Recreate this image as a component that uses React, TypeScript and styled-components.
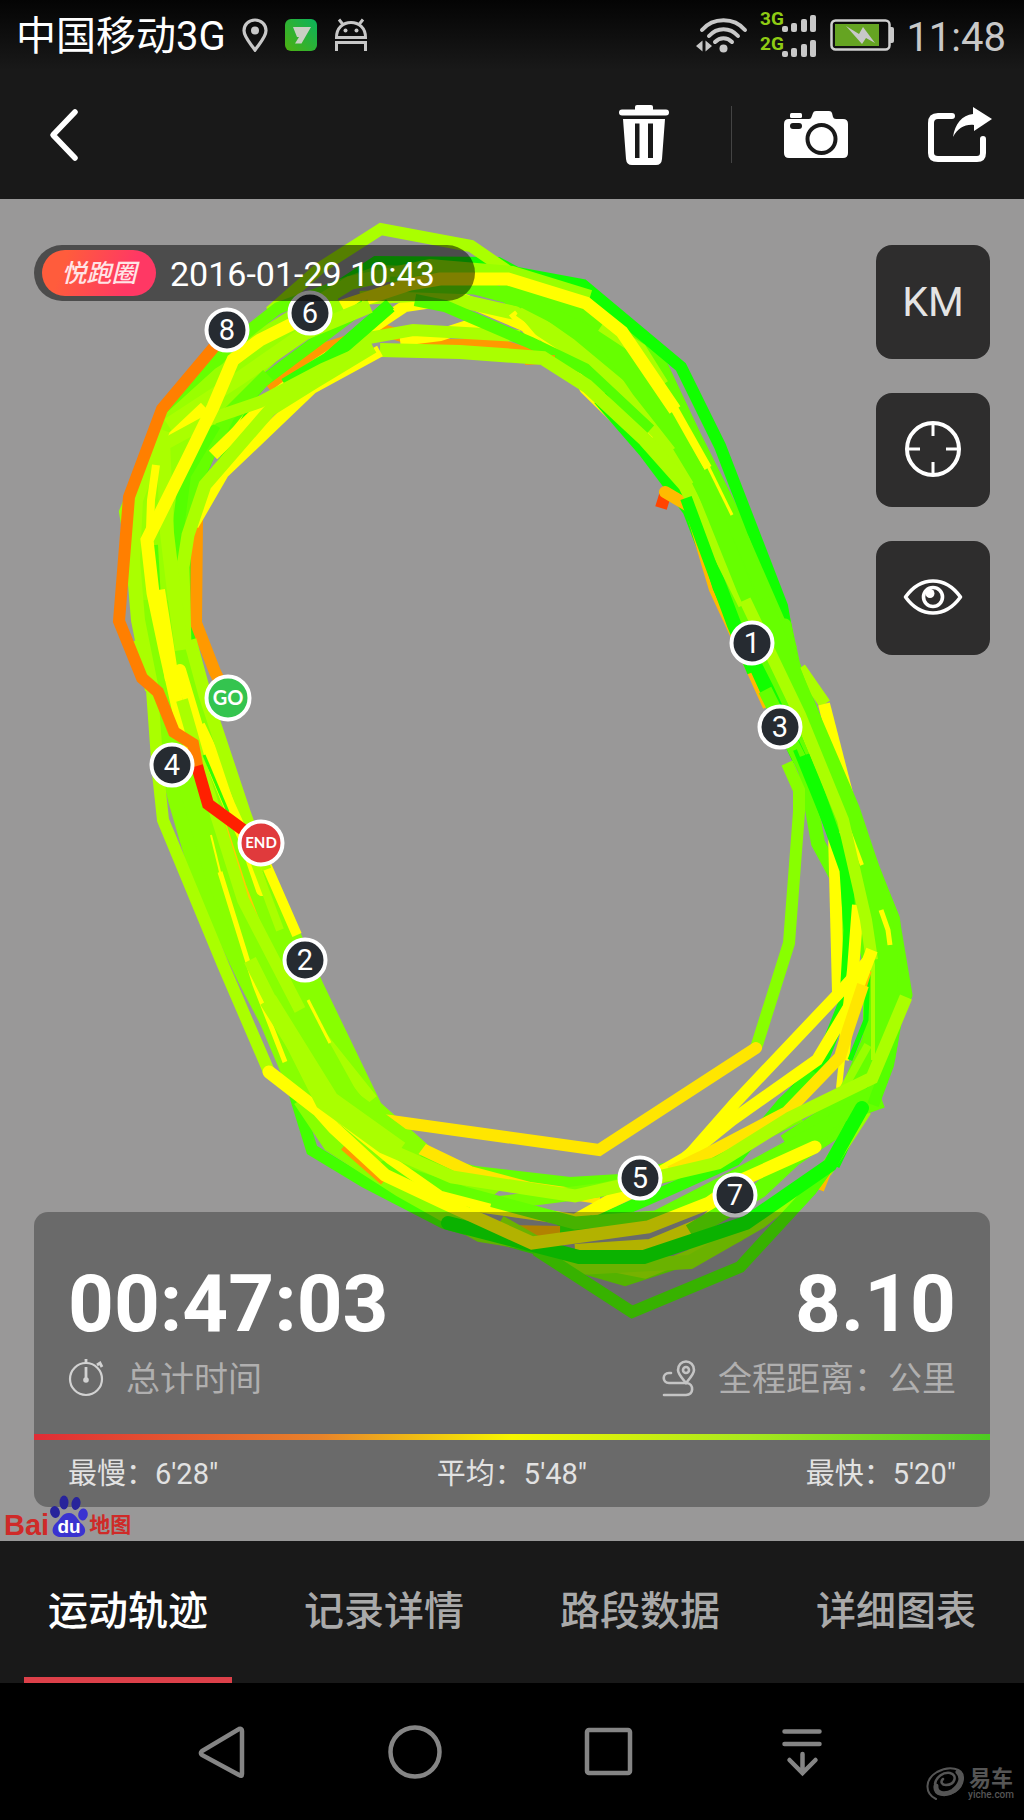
import React, { useState } from "react";
import styled, { createGlobalStyle } from "styled-components";

const sans = `Roboto, "Noto Sans CJK SC", sans-serif`;

const Global = createGlobalStyle`
  * { box-sizing: border-box; }
  body { margin: 0; background: #000; font-family: ${sans}; }
  button { font: inherit; color: inherit; background: none; border: 0; padding: 0; cursor: pointer; }
  svg { display: block; flex: none; }
`;

const Screen = styled.div`
  display: flex;
  flex-direction: column;
  min-height: 100vh;
  background: #191919;
  color: #fff;
`;

const StatusBar = styled.div`
  display: flex;
  align-items: center;
  justify-content: space-between;
  height: 70px;
  padding: 0 18px 0 16px;
  background: linear-gradient(#040404, #191919);
`;

const StatusGroup = styled.div<{ $gap: number }>`
  display: flex;
  align-items: center;
  gap: ${(p) => p.$gap}px;
`;

const Carrier = styled.span`
  padding-top: 4px;
  font-size: 40px;
  line-height: 66px;
`;

const Clock = styled.span`
  padding-top: 5px;
  font-size: 40px;
  line-height: 65px;
  color: #c8c8c8;
`;

const Header = styled.header`
  display: flex;
  align-items: center;
  justify-content: space-between;
  height: 129px;
  padding: 0 32px 0 48px;
`;

const Actions = styled.div`
  display: flex;
  align-items: center;
`;

const Divider = styled.span`
  width: 1px;
  height: 57px;
  margin: 0 52px 0 62px;
  background: #444;
`;

const ShareButton = styled.button`
  margin-left: 80px;
`;

const MapArea = styled.main`
  position: relative;
  display: flex;
  flex: 1;
  flex-direction: column;
  justify-content: space-between;
  gap: 200px;
  padding: 46px 34px 34px;
  background: #999898;
`;

const MapCanvas = styled.svg`
  position: absolute;
  inset: 0;
  width: 100%;
  height: 100%;
`;

const Overlay = styled.div`
  position: relative;
  display: flex;
  align-items: flex-start;
  justify-content: space-between;
`;

const DatePill = styled.div`
  display: flex;
  align-items: center;
  gap: 14px;
  height: 56px;
  padding: 0 40px 0 8px;
  border-radius: 28px;
  background: rgba(0, 0, 0, 0.5);
  font-size: 34px;
  line-height: 54px;
`;

const DateText = styled.time`
  padding-top: 2px;
`;

const Brand = styled.span`
  width: 114px;
  height: 46px;
  border-radius: 23px;
  background: linear-gradient(110deg, #ff5c3c 20%, #ff3864 75%);
  color: #ffe4e6;
  font-size: 25px;
  font-style: italic;
  font-weight: 500;
  line-height: 48px;
  text-align: center;
`;

const MapTools = styled.div`
  display: grid;
  gap: 34px;
`;

const ToolButton = styled.button`
  display: grid;
  place-items: center;
  width: 114px;
  height: 114px;
  border-radius: 16px;
  background: #2e2d2d;
  && { font-size: 41px; color: #e4e4e4; }
`;

const StatsCard = styled.section`
  position: relative;
  padding-top: 44px;
  border-radius: 14px;
  background: rgba(0, 0, 0, 0.3);
`;

const Totals = styled.div`
  display: flex;
  justify-content: space-between;
  padding: 0 34px 28px;
`;

const Total = styled.div<{ $end?: boolean }>`
  display: flex;
  flex-direction: column;
  align-items: ${(p) => (p.$end ? "flex-end" : "flex-start")};
`;

const Value = styled.strong`
  font-size: 80px;
  font-weight: 700;
  line-height: 96px;
`;

const Caption = styled.span`
  display: flex;
  align-items: center;
  gap: 22px;
  color: #b0afaf;
  font-size: 34px;
  line-height: 54px;
`;

const PaceScale = styled.div`
  height: 6px;
  background: linear-gradient(90deg, #e02c36, #e8832a 30%, #f6f600 50%, #a8e81e 75%, #4ccb22);
`;

const PaceRow = styled.div`
  display: flex;
  justify-content: space-between;
  padding: 2px 34px 0;
  color: #e2e2e2;
  font-size: 29px;
  line-height: 65px;
`;

const MapCredit = styled.div`
  position: absolute;
  left: 4px;
  bottom: 4px;
  display: flex;
  align-items: flex-end;
  color: #cf2a28;
  font-size: 21px;
  font-weight: 700;
  line-height: 24px;
`;

const CreditLatin = styled.span`
  font-family: "Liberation Sans", sans-serif;
  font-size: 29px;
`;

const Tabs = styled.nav`
  display: grid;
  grid-template-columns: repeat(4, 1fr);
`;

const Tab = styled.button<{ $active: boolean }>`
  display: flex;
  flex-direction: column;
  align-items: center;
  height: 142px;
  && {
    color: ${(p) => (p.$active ? "#fff" : "#a9a9a9")};
    font-size: 40px;
    font-weight: 500;
    line-height: 142px;
  }

  &::after {
    content: "";
    width: 208px;
    height: 6px;
    margin-top: -6px;
    background: ${(p) => (p.$active ? "#dc4049" : "transparent")};
  }
`;

const SystemNav = styled.nav`
  position: relative;
  display: grid;
  grid-template-columns: repeat(4, 1fr);
  height: 137px;
  padding: 0 125px;
  background: #000;
`;

const SystemButton = styled.button`
  display: grid;
  place-items: center;
`;

const Watermark = styled.div`
  position: absolute;
  right: 10px;
  bottom: 19px;
  display: flex;
  align-items: center;
  gap: 2px;
  color: #555;
`;

const WatermarkText = styled.div`
  display: flex;
  flex-direction: column;
  align-items: center;
  font-size: 22px;
  font-weight: 700;
  line-height: 22px;
`;

const WatermarkUrl = styled.span`
  font-size: 10px;
  font-weight: 500;
  line-height: 10px;
`;

type Track = [string, string, number?, boolean?];

const LIME = "#aaff00";
const GREEN = "#66ff00";
const DEEP = "#33ff00";
const PURE = "#11ff00";
const YELLOW = "#ffff00";
const AMBER = "#ffe600";
const ORANGE = "#ff9900";

// Each lap segment: colour, points, optional width, optional round cap.
const tracks: Track[] = [
  // top of the loop
  [PURE, "300,312 376,262 498,263 517,273 583,285 681,367 720,446 782,606 792,664"],
  [LIME, "270,312 320,268 381,229 471,246 512,274"],
  [GREEN, "222,352 278,308 380,271 500,274"],
  ["#99ff00", "290,320 350,283 430,266 512,273 590,297", 14],
  [ORANGE, "270,390 320,350 383,330 430,345 500,345 555,362"],
  [YELLOW, "230,430 300,376 405,306 460,298 540,332 600,385"],
  [YELLOW, "400,340 440,335 480,322"],
  [LIME, "320,365 363,339 413,330 520,336"],
  [LIME, "360,298 430,294 515,313 579,355 647,420 694,482", 14],
  [YELLOW, "512,313 545,352 600,390 650,440", 8],
  [LIME, "520,310 570,345 630,395 690,470", 14],
  [GREEN, "390,284 475,287 523,300 607,343 639,390 694,460 742,540 790,650", 15],
  [LIME, "602,325 640,350 662,385", 14],
  [YELLOW, "340,307 410,284 440,279 508,279 586,303 622,332 675,410", 13],
  [YELLOW, "673,406 708,468", 8],
  [YELLOW, "706,462 732,515", 3],
  ["#55ff00", "415,300 445,306 531,343 585,369 650,430"],
  // upper right descent
  [ORANGE, "555,359 525,361", 8],
  [YELLOW, "585,388 638,440", 12, true],
  [PURE, "600,398 645,450 690,510 734,625 767,690 800,760", 15],
  ["#ffbb00", "686,506 711,590 747,668 765,708", 4],
  ["#ff4400", "661,508 666,492"],
  ["#ffbb00", "665,492 687,505", 12, true],
  [LIME, "380,350 460,352 543,358 587,386 645,440 685,485 745,604", 14],
  [GREEN, "680,445 700,478 745,590 785,680", 16],
  [PURE, "686,498 733,625 753,672", 12],
  // upper left
  [DEEP, "390,304 320,365 250,415 220,470"],
  ["#55ff00", "365,305 262,382 215,440 190,500 176,540"],
  [DEEP, "390,306 330,358 285,385", 14],
  [GREEN, "225,350 187,395 163,420", 14],
  ["#99ff00", "340,303 290,330 220,375 165,425", 16],
  [LIME, "370,306 305,333 240,378 168,425", 14],
  [GREEN, "268,375 228,415 195,480 178,530", 14],
  ["#55ff00", "215,425 185,475 174,560", 12],
  [YELLOW, "272,398 213,455"],
  ["#99ff00", "130,500 125,512 133,560 138,620", 12],
  [DEEP, "196,530 190,580 190,640"],
  [ORANGE, "197,520 196,623 215,672 228,698"],
  [YELLOW, "380,351 312,388 223,473 193,525"],
  [LIME, "373,347 315,382 270,410 205,485 188,535 183,567 185,647", 13],
  [YELLOW, "205,407 170,440"],
  [LIME, "373,347 323,369 260,402 213,418 167,443"],
  [LIME, "163,440 167,533 175,600 182,650", 14],
  ["#55ff00", "155,545 158,600", 6],
  [LIME, "163,430 136,500 133,560 138,620 152,690", 14],
  [YELLOW, "156,465 151,500 150,530", 8],
  [YELLOW, "310,315 260,340 233,360 213,407 187,460 147,540 153,593 165,650 180,717 197,765", 13],
  [YELLOW, "158,590 166,640 172,680", 14],
  // lower left
  ["#88ff00", "160,735 175,800 200,885 245,980 300,1085", 14],
  [LIME, "138,640 152,690 158,773 163,820 223,965 270,1074"],
  [YELLOW, "200,725 262,855 297,935", 10],
  [LIME, "190,640 205,695 245,815 265,870", 13],
  [YELLOW, "180,670 198,730 230,807 245,840 262,890", 12, true],
  [LIME, "250,850 280,930", 8],
  ["#ffcc00", "222,820 243,885 262,935", 6],
  [LIME, "182,700 205,780 243,900 300,1010 372,1100", 12],
  [YELLOW, "211,835 222,880", 2],
  [YELLOW, "220,872 255,985 285,1062", 5],
  [DEEP, "204,755 228,812", 3],
  // right side
  [LIME, "800,668 825,704", 12],
  [YELLOW, "824,704 850,805"],
  [GREEN, "765,690 805,770 818,843 838,880 850,960", 14],
  [YELLOW, "834,832 838,992"],
  [PURE, "805,755 846,870 850,930 846,1000 822,1060 780,1110", 13],
  [GREEN, "880,935 880,1040 850,1110 790,1150", 34],
  [YELLOW, "858,905 853,970 843,1060", 12],
  [YELLOW, "843,1050 839,1088", 6],
  [PURE, "868,970 866,1020 850,1060", 5],
  [GREEN, "785,625 792,664 842,795 893,918 906,995", 13, true],
  [GREEN, "760,600 790,670 850,810 880,900 888,960 886,1040", 20],
  [LIME, "865,920 873,965 873,1060", 4],
  ["#99ff00", "868,1045 840,1095", 8],
  ["#ffbb00", "866,970 850,1020"],
  [YELLOW, "881,910 888,930 890,945", 5],
  [YELLOW, "785,685 840,815", 8],
  [YELLOW, "848,828 862,865", 4],
  [PURE, "795,750 850,885", 4],
  [LIME, "745,600 800,715 843,820 866,920 872,960", 12],
  ["#88ff00", "787,763 799,790 799,812 789,943 756,1048"],
  [PURE, "882,1078 857,1115 833,1165", 14],
  // bottom sweep
  [AMBER, "380,1120 391,1121 599,1150 756,1048", 12, true],
  ["#44ff00", "295,1095 312,1150 365,1182 444,1223 534,1248 579,1262"],
  ["#88ff00", "300,1100 330,1145 400,1190 480,1235 560,1248", 14],
  [ORANGE, "345,1145 385,1180"],
  [GREEN, "420,1158 475,1172 570,1183 620,1180 680,1165"],
  [AMBER, "420,1148 470,1172 530,1188 600,1198"],
  ["#77ff00", "500,1203 600,1190 690,1170 800,1115", 14],
  [YELLOW, "470,1205 575,1220 610,1200 650,1180"],
  [DEEP, "554,1233 607,1217 673,1188 735,1160 783,1103 811,1077", 12, true],
  [YELLOW, "867,962 840,992 735,1103 685,1160 650,1184 590,1212"],
  [YELLOW, "872,950 853,1000 817,1060 732,1120 685,1158 640,1184"],
  [AMBER, "863,985 848,1030 840,1057 787,1112 701,1157 670,1172"],
  ["#ffbb00", "505,1231 560,1232"],
  ["#77ff00", "462,1222 530,1240 590,1270 625,1280 680,1262 740,1235"],
  [YELLOW, "575,1250 650,1245 705,1222 740,1185", 12],
  ["#aaff00", "560,1256 645,1273 690,1255 740,1225", 11],
  ["#99ff00", "500,1222 580,1268 690,1262 760,1222 826,1170 865,1110", 14],
  ["#ffbb00", "820,1190 832,1160", 8],
  ["#50ff00", "536,1250 632,1312 740,1267 811,1190 840,1150"],
  [GREEN, "690,1232 760,1190 840,1115 882,1100", 16],
  [GREEN, "385,1167 464,1193 575,1223 656,1217 722,1183 820,1130 875,1090", 13, true],
  [PURE, "448,1223 579,1257 644,1257 746,1223 830,1165 862,1108", 14, true],
  ["#55ff00", "896,1020 888,1065 873,1105", 12],
  [YELLOW, "269,1072 318,1110 334,1128 385,1175 444,1203 532,1243 648,1227 709,1203 742,1180 815,1147", 13, true],
  [YELLOW, "330,1110 390,1160 440,1195 490,1208", 9],
  ["#88ff00", "300,1010 350,1100 420,1152", 20],
  [LIME, "250,960 322,1103 383,1147 452,1177 575,1196 632,1183 718,1163 790,1118 872,1078 906,997", 13],
  [LIME, "268,1000 330,1100 400,1150", 18],
  [YELLOW, "308,1000 330,1043", 3],
  // closing stretch
  ["#ff7f00", "225,334 162,409 129,497 119,621 142,678 158,692 174,732 193,744 198,770"],
  ["#ff2000", "197,766 208,804 261,843"],
];

// Areas where the laps overlap completely.
const beds: [string, string][] = [
  ["#66ff00", "500,268 560,285 622,325 665,358 700,432 788,608 800,663 853,800 900,918 905,1000 895,1060 875,1100 850,1100 870,1000 845,880 815,800 760,680 700,510 640,430 560,340 500,300"],
  ["#88ff00", "135,600 150,700 160,770 177,800 200,890 250,1000 291,1097 330,1150 400,1200 470,1215 500,1190 436,1152 381,1103 323,983 250,820 192,643 188,560 140,540"],
  ["#99ff00", "165,412 225,350 290,310 340,303 240,395 200,450 180,540 185,600 140,600 135,500"],
];

const markers = [
  { label: "8", x: 227, y: 330 },
  { label: "6", x: 310, y: 313 },
  { label: "1", x: 752, y: 643 },
  { label: "3", x: 780, y: 727 },
  { label: "4", x: 172, y: 765 },
  { label: "2", x: 305, y: 960 },
  { label: "5", x: 640, y: 1178 },
  { label: "7", x: 735, y: 1195 },
];

const flags = [
  { label: "GO", x: 228, y: 698, fill: "#34c44f", size: 20, dy: 7 },
  { label: "END", x: 261, y: 843, fill: "#e03a3c", size: 15, dy: 5 },
];

function RouteMap() {
  return (
    <MapCanvas viewBox="0 199 1024 1342" preserveAspectRatio="xMidYMid slice" role="img" aria-label="运动轨迹">
      {beds.map(([fill, points], i) => (
        <polygon key={i} points={points} fill={fill} />
      ))}
      {tracks.map(([stroke, points, width = 12, round], i) => (
        <polyline
          key={i}
          points={points}
          fill="none"
          stroke={stroke}
          strokeWidth={width}
          strokeLinecap={round ? "round" : "butt"}
        />
      ))}
      {markers.map((m) => (
        <g key={m.label}>
          <circle cx={m.x} cy={m.y} r="20.5" fill="#262b31" stroke="#fff" strokeWidth="4" />
          <text x={m.x} y={m.y + 10} fill="#fff" fontSize="29" fontFamily="Roboto, sans-serif" textAnchor="middle">
            {m.label}
          </text>
        </g>
      ))}
      {flags.map((f) => (
        <g key={f.label}>
          <circle cx={f.x} cy={f.y} r="21.5" fill={f.fill} stroke="#fff" strokeWidth="4" />
          <text
            x={f.x}
            y={f.y + f.dy}
            fill="#fff"
            fontSize={f.size}
            fontWeight="700"
            fontFamily="Lato, sans-serif"
            textAnchor="middle"
          >
            {f.label}
          </text>
        </g>
      ))}
    </MapCanvas>
  );
}

const PinIcon = () => (
  <svg width="26" height="34" viewBox="0 0 26 34" fill="none">
    <path d="M13 2C6.5 2 2 6.6 2 12.6 2 19.500 9 26 13 32c4-6 11-12.500 11-19.400C24 6.600 19.500 2 13 2Z" stroke="#c8c8c8" strokeWidth="3.200" />
    <circle cx="13" cy="12.500" r="4" fill="#c8c8c8" />
  </svg>
);

const AppBadgeIcon = () => (
  <svg width="34" height="34" viewBox="0 0 34 34">
    <defs>
      <linearGradient id="badge" x1="0" y1="1" x2="1" y2="0">
        <stop offset="0" stopColor="#4db010" />
        <stop offset="1" stopColor="#0ab35c" />
      </linearGradient>
    </defs>
    <rect x="1" y="1" width="32" height="32" rx="6" fill="url(#badge)" />
    <path d="M9 9h18L17.500 25.500h-6.500l4-6.500h-2Z" fill="#c9cfc4" />
  </svg>
);

const RobotIcon = () => (
  <svg width="34" height="34" viewBox="0 0 34 34" fill="none" stroke="#c8c8c8" strokeWidth="3">
    <path d="M2.500 19.500C2.500 10 9 4.500 17 4.500S31.500 10 31.500 19.500Z" />
    <path d="M5 1.500l4 5M29 1.500l-4 5M2.500 33v-8.500h29V33" />
    <circle cx="11.500" cy="12.500" r="2" fill="#c8c8c8" stroke="none" />
    <circle cx="22.500" cy="12.500" r="2" fill="#c8c8c8" stroke="none" />
  </svg>
);

const WifiIcon = () => (
  <svg width="52" height="38" viewBox="0 0 52 38" fill="none" stroke="#c8c8c8" strokeWidth="4" strokeLinecap="round">
    <path d="M6 14C17 1 38 1 49 14M13 20c8-9 21-9 29 0M19 26c5-5 12-5 17 0" />
    <circle cx="27.500" cy="32.500" r="4" fill="#c8c8c8" stroke="none" />
    <path d="M6.500 24.500v11L0 30ZM9.500 24.500v11L16 30Z" fill="#c8c8c8" stroke="none" />
  </svg>
);

const SignalIcon = () => (
  <svg width="58" height="58" viewBox="0 0 58 58">
    <g fontFamily="Roboto, sans-serif" fontSize="19" fontWeight="700" fill="#8fcb14">
      <text x="0" y="19">3G</text>
      <text x="0" y="44">2G</text>
    </g>
    {[0, 25].map((y) => (
      <g key={y} fill="#c8c8c8">
        <rect x="22" y={y + 20} width="6" height="6" rx="2" />
        <rect x="31" y={y + 17} width="6" height="9" rx="2" />
        <rect x="41" y={y + 13} width="6" height="13" rx="2" />
        <rect x="50" y={y + 9} width="6" height="17" rx="2" />
      </g>
    ))}
  </svg>
);

const BatteryIcon = () => (
  <svg width="64" height="32" viewBox="0 0 64 32">
    <rect x="1.500" y="1.500" width="58" height="29" rx="4" fill="none" stroke="#d0d0d0" strokeWidth="2.500" />
    <rect x="5" y="5" width="44" height="22" fill="#65a422" />
    <path d="M60 8h2q2 0 2 2v12q0 2-2 2h-2Z" fill="#c8c8c8" />
    <path d="M16 7l13 8 4-7 12 16-9-5-4 6Z" fill="#c8c8c8" />
  </svg>
);

const BackIcon = () => (
  <svg width="32" height="54" viewBox="0 0 32 54" fill="none" stroke="#fff" strokeWidth="5.500" strokeLinecap="round" strokeLinejoin="round">
    <path d="M27 4L5 27l22 23" />
  </svg>
);

const TrashIcon = () => (
  <svg width="50" height="60" viewBox="0 0 50 60" fill="#fff">
    <path d="M16 6V2q0-2 2-2h14q2 0 2 2v4Z" />
    <rect x="0" y="4.500" width="50" height="6" rx="3" />
    <path fillRule="evenodd" d="M4 14h42l-3 40q-.5 6-6 6H13q-5.500 0-6-6ZM16 18.500V53h4.500V18.500ZM29 18.500V53h5V18.500Z" />
  </svg>
);

const CameraIcon = () => (
  <svg width="64" height="48" viewBox="0 0 64 48">
    <rect x="6" y="2" width="12" height="5" rx="1.500" fill="#fff" />
    <path d="M5 8h20q2 0 2.500-2L29 2q.5-2 3-2h13q2.500 0 3 2l1 4q.5 2 3 2h7q5 0 5 5v29q0 5-5 5H5q-5 0-5-5V13q0-5 5-5Z" fill="#fff" />
    <rect x="6" y="12" width="12" height="6" rx="3" fill="#191919" />
    <circle cx="37.500" cy="28" r="14" fill="none" stroke="#191919" strokeWidth="4" />
  </svg>
);

const ShareIcon = () => (
  <svg width="64" height="56" viewBox="0 0 64 56">
    <path d="M24 9H10q-7 0-7 7v30q0 6 7 6h39q6 0 6-6V32" fill="none" stroke="#fff" strokeWidth="6" strokeLinecap="round" />
    <path d="M45 0L64 12 46 24v-6C37 17 30 21 25 30 27 17 34 8 45 7Z" fill="#fff" />
  </svg>
);

const TargetIcon = () => (
  <svg width="58" height="58" viewBox="0 0 58 58" fill="none" stroke="#fff">
    <circle cx="29" cy="28" r="26" strokeWidth="4" />
    <path d="M29 3v12M29 41v12M4 28h12M42 28h12" strokeWidth="3" />
  </svg>
);

const EyeIcon = () => (
  <svg width="60" height="38" viewBox="0 0 60 38" fill="none" stroke="#fff" strokeWidth="3.600">
    <path d="M2.500 18C9 9 18 2 30 2s21 7 27.500 16C51 27 42 34 30 34S9 27 2.500 18Z" strokeLinejoin="round" />
    <circle cx="30" cy="18" r="9.500" />
    <circle cx="27" cy="14.500" r="4.500" fill="#fff" stroke="none" />
  </svg>
);

const TimerIcon = () => (
  <svg width="36" height="40" viewBox="0 0 36 40" fill="none" stroke="#d2d2d2" strokeWidth="2.200">
    <circle cx="18" cy="20" r="16" />
    <path d="M18 0v4M29 6l3-2 2 4M18 8v12" strokeWidth="2.800" />
    <circle cx="18" cy="21" r="2.800" fill="#d2d2d2" stroke="none" />
  </svg>
);

const RouteIcon = () => (
  <svg width="34" height="38" viewBox="0 0 34 38" fill="none" stroke="#c4c4c4" strokeWidth="2.600" strokeLinecap="round">
    <path d="M9 13H7c-7 0-7 10 0 10h18c7 1 7 12-1 12H2" />
    <path d="M24 23c-4-5-8-9-8-13 0-5 3.500-8.500 8-8.500S32 5 32 10c0 4-4 8-8 13Z" />
    <circle cx="24" cy="10" r="3" />
  </svg>
);

const PawLogo = () => (
  <svg width="40" height="42" viewBox="0 0 40 42">
    <g fill="#28249b">
      <ellipse cx="15" cy="7.500" rx="4.500" ry="7" />
      <ellipse cx="27" cy="8.500" rx="4.500" ry="6.500" transform="rotate(10 27 8.500)" />
      <ellipse cx="6" cy="17" rx="4.800" ry="6" transform="rotate(-15 6 17)" />
    </g>
    <g fill="#3a33d0">
      <ellipse cx="34" cy="19.500" rx="4.800" ry="6" transform="rotate(10 34 19.500)" />
      <path d="M20 18c7 0 8 7 13 11 6 6 3 13-5 13H12C3 42 1 34 7 28c5-4 6-10 13-10Z" />
    </g>
    <text x="20" y="38" fill="#fff" fontFamily="Liberation Sans, sans-serif" fontWeight="700" fontSize="19" textAnchor="middle">
      du
    </text>
  </svg>
);

const SwirlLogo = () => (
  <svg width="40" height="34" viewBox="0 0 40 34" fill="none" stroke="#555" strokeLinecap="round">
    <path d="M10 32C-2 26-1 12 11 5 22-1 38 0 37 12c-1 11-13 18-22 15" strokeWidth="2" />
    <path d="M32 5c6 6 2 14-5 19-8 5-18 3-17-5" strokeWidth="5" />
    <path d="M9 17c1-7 8-12 15-11 8 2 5 12-4 12-4 0-6-3-3-6" strokeWidth="2.500" />
  </svg>
);

const systemIcons = [
  { name: "返回", art: <path d="M48 7v43q0 3-3 1L8 31q-2-2 0-4L45 5q3-1 3 2Z" /> },
  { name: "主页", art: <circle cx="27" cy="28" r="24.500" /> },
  { name: "最近任务", art: <rect x="6" y="6" width="43" height="43" rx="2" /> },
  { name: "通知", art: <path d="M9.500 7.500h35M9.500 20h35M27.500 30v18M14.500 36l13 13 13-13" strokeLinecap="round" /> },
];

const tabNames = ["运动轨迹", "记录详情", "路段数据", "详细图表"];

export default function App() {
  const [tab, setTab] = useState(0);
  return (
    <Screen>
      <Global />
      <StatusBar>
        <StatusGroup $gap={16}>
          <Carrier>中国移动3G</Carrier>
          <PinIcon />
          <AppBadgeIcon />
          <RobotIcon />
        </StatusGroup>
        <StatusGroup $gap={12}>
          <WifiIcon />
          <SignalIcon />
          <BatteryIcon />
          <Clock>11:48</Clock>
        </StatusGroup>
      </StatusBar>
      <Header>
        <button aria-label="返回"><BackIcon /></button>
        <Actions>
          <button aria-label="删除"><TrashIcon /></button>
          <Divider />
          <button aria-label="拍照"><CameraIcon /></button>
          <ShareButton aria-label="分享"><ShareIcon /></ShareButton>
        </Actions>
      </Header>
      <MapArea>
        <RouteMap />
        <Overlay>
          <DatePill>
            <Brand>悦跑圈</Brand>
            <DateText dateTime="2016-01-29T10:43">2016-01-29 10:43</DateText>
          </DatePill>
          <MapTools>
            <ToolButton>KM</ToolButton>
            <ToolButton aria-label="定位"><TargetIcon /></ToolButton>
            <ToolButton aria-label="显示"><EyeIcon /></ToolButton>
          </MapTools>
        </Overlay>
        <StatsCard>
          <Totals>
            <Total>
              <Value>00:47:03</Value>
              <Caption><TimerIcon />总计时间</Caption>
            </Total>
            <Total $end>
              <Value>8.10</Value>
              <Caption><RouteIcon />全程距离：公里</Caption>
            </Total>
          </Totals>
          <PaceScale />
          <PaceRow>
            <span>最慢：6'28"</span>
            <span>平均：5'48"</span>
            <span>最快：5'20"</span>
          </PaceRow>
        </StatsCard>
        <MapCredit>
          <CreditLatin>Bai</CreditLatin>
          <PawLogo />
          <span>地图</span>
        </MapCredit>
      </MapArea>
      <Tabs>
        {tabNames.map((name, i) => (
          <Tab key={name} $active={i === tab} onClick={() => setTab(i)}>{name}</Tab>
        ))}
      </Tabs>
      <SystemNav>
        {systemIcons.map((icon) => (
          <SystemButton key={icon.name} aria-label={icon.name}>
            <svg width="55" height="56" viewBox="0 0 55 56" fill="none" stroke="#858585" strokeWidth="4.500">{icon.art}</svg>
          </SystemButton>
        ))}
        <Watermark>
          <SwirlLogo />
          <WatermarkText>
            易车
            <WatermarkUrl>yiche.com</WatermarkUrl>
          </WatermarkText>
        </Watermark>
      </SystemNav>
    </Screen>
  );
}
